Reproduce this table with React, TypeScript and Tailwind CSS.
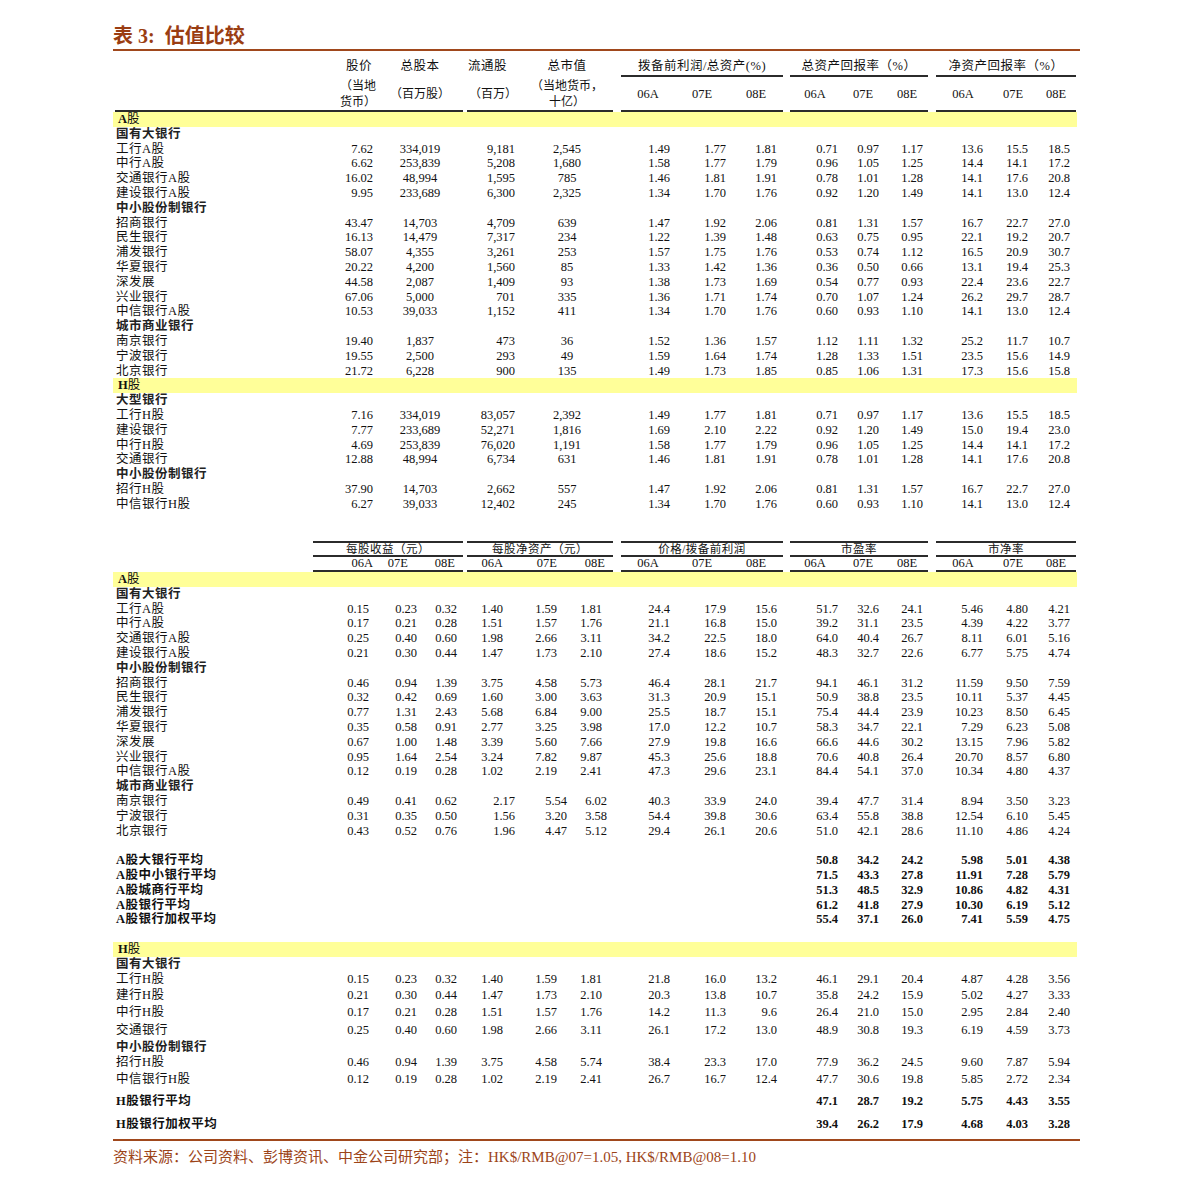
import React from "react";

type Entry = string | [string, string];

const topRows: string[] = [
  "!A",
  "#国有大银行",
  "工行A股 7.62 334,019 9,181 2,545 1.49 1.77 1.81 0.71 0.97 1.17 13.6 15.5 18.5",
  "中行A股 6.62 253,839 5,208 1,680 1.58 1.77 1.79 0.96 1.05 1.25 14.4 14.1 17.2",
  "交通银行A股 16.02 48,994 1,595 785 1.46 1.81 1.91 0.78 1.01 1.28 14.1 17.6 20.8",
  "建设银行A股 9.95 233,689 6,300 2,325 1.34 1.70 1.76 0.92 1.20 1.49 14.1 13.0 12.4",
  "#中小股份制银行",
  "招商银行 43.47 14,703 4,709 639 1.47 1.92 2.06 0.81 1.31 1.57 16.7 22.7 27.0",
  "民生银行 16.13 14,479 7,317 234 1.22 1.39 1.48 0.63 0.75 0.95 22.1 19.2 20.7",
  "浦发银行 58.07 4,355 3,261 253 1.57 1.75 1.76 0.53 0.74 1.12 16.5 20.9 30.7",
  "华夏银行 20.22 4,200 1,560 85 1.33 1.42 1.36 0.36 0.50 0.66 13.1 19.4 25.3",
  "深发展 44.58 2,087 1,409 93 1.38 1.73 1.69 0.54 0.77 0.93 22.4 23.6 22.7",
  "兴业银行 67.06 5,000 701 335 1.36 1.71 1.74 0.70 1.07 1.24 26.2 29.7 28.7",
  "中信银行A股 10.53 39,033 1,152 411 1.34 1.70 1.76 0.60 0.93 1.10 14.1 13.0 12.4",
  "#城市商业银行",
  "南京银行 19.40 1,837 473 36 1.52 1.36 1.57 1.12 1.11 1.32 25.2 11.7 10.7",
  "宁波银行 19.55 2,500 293 49 1.59 1.64 1.74 1.28 1.33 1.51 23.5 15.6 14.9",
  "北京银行 21.72 6,228 900 135 1.49 1.73 1.85 0.85 1.06 1.31 17.3 15.6 15.8",
  "!H",
  "#大型银行",
  "工行H股 7.16 334,019 83,057 2,392 1.49 1.77 1.81 0.71 0.97 1.17 13.6 15.5 18.5",
  "建设银行 7.77 233,689 52,271 1,816 1.69 2.10 2.22 0.92 1.20 1.49 15.0 19.4 23.0",
  "中行H股 4.69 253,839 76,020 1,191 1.58 1.77 1.79 0.96 1.05 1.25 14.4 14.1 17.2",
  "交通银行 12.88 48,994 6,734 631 1.46 1.81 1.91 0.78 1.01 1.28 14.1 17.6 20.8",
  "#中小股份制银行",
  "招行H股 37.90 14,703 2,662 557 1.47 1.92 2.06 0.81 1.31 1.57 16.7 22.7 27.0",
  "中信银行H股 6.27 39,033 12,402 245 1.34 1.70 1.76 0.60 0.93 1.10 14.1 13.0 12.4",
];

const bottomRows: Entry[] = [
  "!A",
  "#国有大银行",
  "工行A股 0.15 0.23 0.32 1.40 1.59 1.81 24.4 17.9 15.6 51.7 32.6 24.1 5.46 4.80 4.21",
  "中行A股 0.17 0.21 0.28 1.51 1.57 1.76 21.1 16.8 15.0 39.2 31.1 23.5 4.39 4.22 3.77",
  "交通银行A股 0.25 0.40 0.60 1.98 2.66 3.11 34.2 22.5 18.0 64.0 40.4 26.7 8.11 6.01 5.16",
  "建设银行A股 0.21 0.30 0.44 1.47 1.73 2.10 27.4 18.6 15.2 48.3 32.7 22.6 6.77 5.75 4.74",
  "#中小股份制银行",
  "招商银行 0.46 0.94 1.39 3.75 4.58 5.73 46.4 28.1 21.7 94.1 46.1 31.2 11.59 9.50 7.59",
  "民生银行 0.32 0.42 0.69 1.60 3.00 3.63 31.3 20.9 15.1 50.9 38.8 23.5 10.11 5.37 4.45",
  "浦发银行 0.77 1.31 2.43 5.68 6.84 9.00 25.5 18.7 15.1 75.4 44.4 23.9 10.23 8.50 6.45",
  "华夏银行 0.35 0.58 0.91 2.77 3.25 3.98 17.0 12.2 10.7 58.3 34.7 22.1 7.29 6.23 5.08",
  "深发展 0.67 1.00 1.48 3.39 5.60 7.66 27.9 19.8 16.6 66.6 44.6 30.2 13.15 7.96 5.82",
  "兴业银行 0.95 1.64 2.54 3.24 7.82 9.87 45.3 25.6 18.8 70.6 40.8 26.4 20.70 8.57 6.80",
  "中信银行A股 0.12 0.19 0.28 1.02 2.19 2.41 47.3 29.6 23.1 84.4 54.1 37.0 10.34 4.80 4.37",
  "#城市商业银行",
  "^南京银行 0.49 0.41 0.62 2.17 5.54 6.02 40.3 33.9 24.0 39.4 47.7 31.4 8.94 3.50 3.23",
  "^宁波银行 0.31 0.35 0.50 1.56 3.20 3.58 54.4 39.8 30.6 63.4 55.8 38.8 12.54 6.10 5.45",
  "^北京银行 0.43 0.52 0.76 1.96 4.47 5.12 29.4 26.1 20.6 51.0 42.1 28.6 11.10 4.86 4.24",
  "",
  "*A股大银行平均 50.8 34.2 24.2 5.98 5.01 4.38",
  "*A股中小银行平均 71.5 43.3 27.8 11.91 7.28 5.79",
  "*A股城商行平均 51.3 48.5 32.9 10.86 4.82 4.31",
  "*A股银行平均 61.2 41.8 27.9 10.30 6.19 5.12",
  "*A股银行加权平均 55.4 37.1 26.0 7.41 5.59 4.75",
  "",
  "!H",
  "#国有大银行",
  "工行H股 0.15 0.23 0.32 1.40 1.59 1.81 21.8 16.0 13.2 46.1 29.1 20.4 4.87 4.28 3.56",
  ["建行H股 0.21 0.30 0.44 1.47 1.73 2.10 20.3 13.8 10.7 35.8 24.2 15.9 5.02 4.27 3.33", "h-[18px]"],
  ["中行H股 0.17 0.21 0.28 1.51 1.57 1.76 14.2 11.3 9.6 26.4 21.0 15.0 2.95 2.84 2.40", "h-[17px]"],
  ["交通银行 0.25 0.40 0.60 1.98 2.66 3.11 26.1 17.2 13.0 48.9 30.8 19.3 6.19 4.59 3.73", "h-[19px]"],
  ["#中小股份制银行", "h-[15px]"],
  ["招行H股 0.46 0.94 1.39 3.75 4.58 5.74 38.4 23.3 17.0 77.9 36.2 24.5 9.60 7.87 5.94", "h-[15px]"],
  ["中信银行H股 0.12 0.19 0.28 1.02 2.19 2.41 26.7 16.7 12.4 47.7 30.6 19.8 5.85 2.72 2.34", "h-[19px]"],
  ["*H股银行平均 47.1 28.7 19.2 5.75 4.43 3.55", "h-[25px]"],
  ["*H股银行加权平均 39.4 26.2 17.9 4.68 4.03 3.28", "h-[21px]"],
];

function RightCells({ v, bold }: { v: string[]; bold?: boolean }) {
  const w = bold ? "font-bold" : "";
  return (
    <>
      <div className={`flex w-[162px] shrink-0 ${w}`}>
        <div className="w-[54px] pr-[5px] text-right">{v[0]}</div>
        <div className="w-[54px] pr-[3px] text-right">{v[1]}</div>
        <div className="w-[54px] pr-[6px] text-right">{v[2]}</div>
      </div>
      <div className={`ml-[7px] flex w-[138px] shrink-0 ${w}`}>
        <div className="w-[50px] pr-[2px] text-right">{v[3]}</div>
        <div className="w-[46px] pr-[7px] text-right">{v[4]}</div>
        <div className="w-[42px] pr-[5px] text-right">{v[5]}</div>
      </div>
      <div className={`ml-[8px] flex w-[140px] shrink-0 ${w}`}>
        <div className="w-[54px] pr-[7px] text-right">{v[6]}</div>
        <div className="w-[46px] pr-[8px] text-right">{v[7]}</div>
        <div className="w-[40px] pr-[6px] text-right">{v[8]}</div>
      </div>
    </>
  );
}

function SubHeads() {
  return (
    <>
      <div className="flex w-[162px] shrink-0">
        <div className="flex w-[54px] justify-center">06A</div>
        <div className="flex w-[54px] justify-center">07E</div>
        <div className="flex w-[54px] justify-center">08E</div>
      </div>
      <div className="ml-[7px] flex w-[138px] shrink-0">
        <div className="flex w-[50px] justify-center">06A</div>
        <div className="flex w-[46px] justify-center">07E</div>
        <div className="flex w-[42px] justify-center">08E</div>
      </div>
      <div className="ml-[8px] flex w-[140px] shrink-0">
        <div className="flex w-[54px] justify-center">06A</div>
        <div className="flex w-[46px] justify-center">07E</div>
        <div className="flex w-[40px] justify-center">08E</div>
      </div>
    </>
  );
}

function Band({ label }: { label: string }) {
  return (
    <div className="flex h-[14.8px] w-[964px] items-center bg-[#ffff99] pl-[5px]">
      <span className="font-bold">{label}</span>
      <span>股</span>
    </div>
  );
}

function Rule({ first }: { first: string }) {
  return (
    <div className="flex h-[2px]">
      <div className={`h-[2px] shrink-0 bg-[#2b2b2b] ${first}`} />
      <div className="ml-[4px] h-[2px] w-[146px] shrink-0 bg-[#2b2b2b]" />
      <div className="ml-[8px] h-[2px] w-[162px] shrink-0 bg-[#2b2b2b]" />
      <div className="ml-[7px] h-[2px] w-[138px] shrink-0 bg-[#2b2b2b]" />
      <div className="ml-[8px] h-[2px] w-[140px] shrink-0 bg-[#2b2b2b]" />
    </div>
  );
}

function TopRow({ s }: { s: string }) {
  if (s.startsWith("!")) return <Band label={s.slice(1)} />;
  if (s.startsWith("#"))
    return (
      <div className="flex h-[14.8px] items-center pl-[3px] font-bold tracking-[0.5px] text-[#222]">
        {s.slice(1)}
      </div>
    );
  const [label, ...v] = s.split(" ");
  return (
    <div className="flex h-[14.8px] items-center whitespace-nowrap">
      <div className="w-[217px] shrink-0 pl-[3px] tracking-[0.5px]">{label}</div>
      <div className="w-[50px] shrink-0 pr-[7px] text-right">{v[0]}</div>
      <div className="w-[80px] shrink-0 text-center">{v[1]}</div>
      <div className="w-[70px] shrink-0 pr-[15px] text-right">{v[2]}</div>
      <div className="w-[74px] shrink-0 text-center">{v[3]}</div>
      <div className="w-[17px] shrink-0" />
      <RightCells v={v.slice(4)} />
    </div>
  );
}

function BottomRow({ e }: { e: Entry }) {
  const s = typeof e === "string" ? e : e[0];
  const h = typeof e === "string" ? "h-[14.8px]" : e[1];
  if (s === "") return <div className="h-[14.8px]" />;
  if (s.startsWith("!")) return <Band label={s.slice(1)} />;
  if (s.startsWith("#"))
    return (
      <div className={`flex items-center pl-[3px] font-bold tracking-[0.5px] text-[#222] ${h}`}>
        {s.slice(1)}
      </div>
    );
  if (s.startsWith("*")) {
    const [label, ...v] = s.slice(1).split(" ");
    return (
      <div className={`flex items-center whitespace-nowrap ${h}`}>
        <div className="w-[508px] shrink-0 pl-[3px] font-bold tracking-[0.5px]">{label}</div>
        <RightCells v={["", "", "", ...v]} bold />
      </div>
    );
  }
  const shift = s.startsWith("^");
  const [label, ...v] = (shift ? s.slice(1) : s).split(" ");
  return (
    <div className={`flex items-center whitespace-nowrap ${h}`}>
      <div className="w-[200px] shrink-0 pl-[3px] tracking-[0.5px]">{label}</div>
      <div className="w-[70px] shrink-0 pr-[14px] text-right">{v[0]}</div>
      <div className="w-[40px] shrink-0 pr-[6px] text-right">{v[1]}</div>
      <div className="w-[40px] shrink-0 pr-[6px] text-right">{v[2]}</div>
      <div className="w-[4px] shrink-0" />
      <div className={`w-[53px] shrink-0 text-right ${shift ? "pr-[5px]" : "pr-[17px]"}`}>{v[3]}</div>
      <div className={`w-[50px] shrink-0 text-right ${shift ? "pr-[3px]" : "pr-[13px]"}`}>{v[4]}</div>
      <div className={`w-[43px] shrink-0 text-right ${shift ? "pr-[6px]" : "pr-[11px]"}`}>{v[5]}</div>
      <div className="w-[8px] shrink-0" />
      <RightCells v={v.slice(6)} />
    </div>
  );
}

export default function App() {
  return (
    <div className="min-h-[1185px] w-[1191px] bg-white pl-[113px] pt-[24px] font-['Liberation_Serif','Noto_Sans_CJK_SC',serif] text-[12.5px] text-[#111]">
      <div className="h-[24px] text-[20px] leading-[24px] font-bold text-[#9a3d12]">
        表 3:&nbsp; 估值比较
      </div>
      <div className="mt-[1px] h-[1.5px] w-[967px] bg-[#a0481c]" />

      {/* top table header */}
      <div className="mt-[8.5px] flex h-[15px] items-center whitespace-nowrap tracking-[0.5px]">
        <div className="w-[217px] shrink-0" />
        <div className="w-[50px] shrink-0 pr-[8px] text-right">股价</div>
        <div className="flex w-[80px] shrink-0 justify-center">总股本</div>
        <div className="w-[70px] shrink-0 pr-[23px] text-right">流通股</div>
        <div className="flex w-[74px] shrink-0 justify-center">总市值</div>
        <div className="w-[17px] shrink-0" />
        <div className="flex w-[162px] shrink-0 justify-center">拨备前利润/总资产(%)</div>
        <div className="ml-[7px] flex w-[138px] shrink-0 justify-center">总资产回报率（%）</div>
        <div className="ml-[8px] flex w-[140px] shrink-0 justify-center">净资产回报率（%）</div>
      </div>
      <div className="mt-[1px] flex h-[2px]">
        <div className="ml-[508px] h-[2px] w-[162px] shrink-0 bg-[#2b2b2b]" />
        <div className="ml-[7px] h-[2px] w-[138px] shrink-0 bg-[#2b2b2b]" />
        <div className="ml-[8px] h-[2px] w-[140px] shrink-0 bg-[#2b2b2b]" />
      </div>
      <div className="flex h-[33px] items-center whitespace-nowrap text-[12px] leading-[16px]">
        <div className="w-[217px] shrink-0" />
        <div className="flex w-[50px] shrink-0 flex-col items-end pr-[4px]">
          <span>（当地</span>
          <span>货币）</span>
        </div>
        <div className="flex w-[80px] shrink-0 justify-center">（百万股）</div>
        <div className="w-[70px] shrink-0 pr-[13px] text-right">（百万）</div>
        <div className="flex w-[74px] shrink-0 flex-col items-center">
          <span>（当地货币，</span>
          <span>十亿）</span>
        </div>
        <div className="w-[17px] shrink-0" />
        <div className="flex text-[12.5px]">
          <SubHeads />
        </div>
      </div>
      <Rule first="ml-[2px] w-[348px]" />

      {topRows.map((s, i) => (
        <TopRow key={i} s={s} />
      ))}

      {/* bottom table header */}
      <div className="mt-[29.5px]">
        <Rule first="ml-[200px] w-[150px]" />
      </div>
      <div className="flex h-[12px] items-center whitespace-nowrap text-[11.5px] leading-[12px] tracking-[0.5px]">
        <div className="ml-[200px] flex w-[150px] shrink-0 justify-center">每股收益（元）</div>
        <div className="ml-[4px] flex w-[146px] shrink-0 justify-center">每股净资产（元）</div>
        <div className="ml-[8px] flex w-[162px] shrink-0 justify-center">价格/拨备前利润</div>
        <div className="ml-[7px] flex w-[138px] shrink-0 justify-center">市盈率</div>
        <div className="ml-[8px] flex w-[140px] shrink-0 justify-center">市净率</div>
      </div>
      <Rule first="ml-[200px] w-[150px]" />
      <div className="flex h-[13px] items-center whitespace-nowrap leading-[13px]">
        <div className="w-[200px] shrink-0" />
        <div className="w-[70px] shrink-0 pr-[10px] text-right">06A</div>
        <div className="w-[40px] shrink-0 pr-[15px] text-right">07E</div>
        <div className="w-[40px] shrink-0 pr-[8px] text-right">08E</div>
        <div className="w-[4px] shrink-0" />
        <div className="w-[53px] shrink-0 pr-[17px] text-right">06A</div>
        <div className="w-[50px] shrink-0 pr-[13px] text-right">07E</div>
        <div className="w-[43px] shrink-0 pr-[8px] text-right">08E</div>
        <div className="w-[8px] shrink-0" />
        <SubHeads />
      </div>
      <Rule first="ml-[200px] w-[150px]" />

      {bottomRows.map((e, i) => (
        <BottomRow key={i} e={e} />
      ))}

      <div className="mt-[4px] h-[1.5px] w-[967px] bg-[#a0481c]" />
      <div className="mt-[6px] text-[15px] leading-[20px] text-[#9c4418]">
        资料来源：公司资料、彭博资讯、中金公司研究部；注：HK$/RMB@07=1.05, HK$/RMB@08=1.10
      </div>
    </div>
  );
}
